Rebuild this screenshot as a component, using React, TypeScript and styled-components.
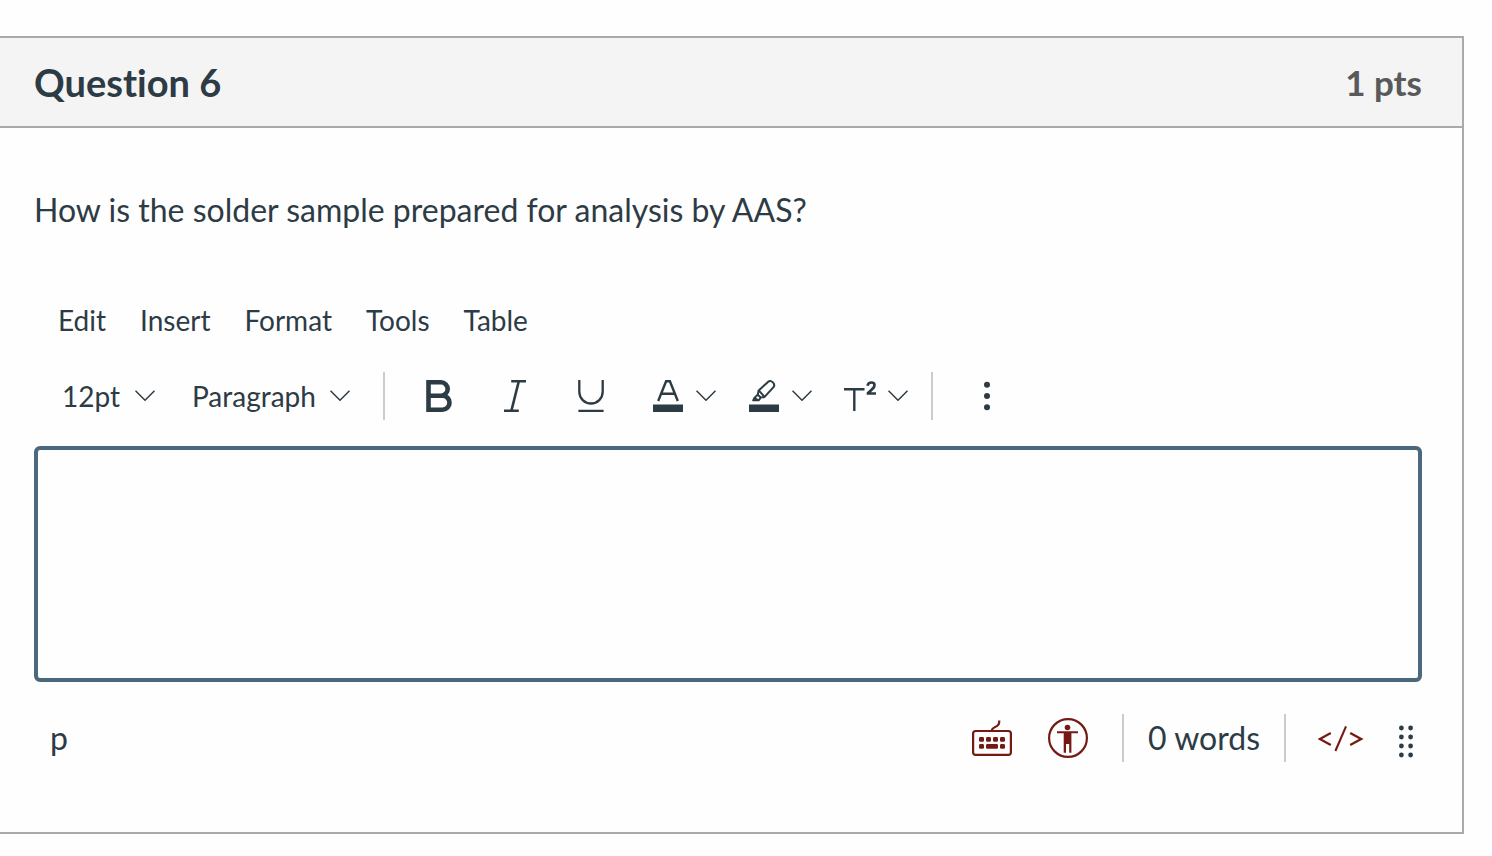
import React from "react";
import styled, { createGlobalStyle } from "styled-components";

const ink = "#2d3b45";
const brand = "#751a12";

const GlobalStyle = createGlobalStyle`
  *, *::before, *::after { box-sizing: border-box; }
  body {
    margin: 0;
    background: #fefefe;
    color: ${ink};
    font-family: Lato, "Liberation Sans", sans-serif;
    font-variant-ligatures: none;
    text-rendering: optimizeLegibility;
  }
`;

const Card = styled.section`
  margin: 36px 28px 22px 0;
  border: 2px solid #aaa;
  border-left: 0;
`;

const Header = styled.header`
  display: flex;
  justify-content: space-between;
  align-items: center;
  padding: 20px 40px 20px 34px;
  border-bottom: 2px solid #aaa;
  background: #f4f4f4;
  line-height: 48px;
`;

const Title = styled.h2`
  margin: 0;
  font-size: 38px;
  font-weight: 700;
`;

const Points = styled.span`
  color: #595959;
  font-size: 35px;
  font-weight: 700;
`;

const Content = styled.div`
  padding: 58px 40px 70px 34px;
`;

const Prompt = styled.p`
  margin: 0 0 66px;
  font-size: 32px;
  line-height: 48px;
`;

const MenuBar = styled.nav`
  display: flex;
  padding: 0 7px;
`;

const MenuButton = styled.button`
  padding: 0 17px;
  border: 0;
  background: none;
  color: inherit;
  font: 28px/40px Lato, "Liberation Sans", sans-serif;
`;

const Toolbar = styled.div`
  display: flex;
  align-items: center;
  padding: 32px 0 26px 24px;
`;

const SelectField = styled.label`
  display: grid;
  align-items: center;
  margin-right: 33px;

  > * { grid-area: 1 / 1; }
  > svg { justify-self: end; pointer-events: none; }
`;

const Select = styled.select`
  appearance: none;
  padding: 0 34px 0 4px;
  border: 0;
  background: none;
  color: inherit;
  font: 28px/48px Lato, "Liberation Sans", sans-serif;
`;

const Divider = styled.span<{ $color: string }>`
  flex: none;
  width: 2px;
  height: 48px;
  background: ${(p) => p.$color};
`;

const ToolGroup = styled.div`
  display: flex;
  align-items: center;
  padding: 0 14px 0 16px;
`;

const ToolButton = styled.button`
  display: flex;
  align-items: center;
  justify-content: center;
  width: 76px;
  height: 48px;
  padding: 0;
  border: 0;
  background: none;
  color: inherit;
`;

const SplitButton = styled(ToolButton)`
  justify-content: flex-start;
  gap: 12px;
  width: 96px;
  padding-left: 23px;
`;

const Editor = styled.textarea`
  display: block;
  width: 100%;
  height: 236px;
  padding: 16px;
  border: 4px solid #4b687c;
  border-radius: 6px;
  outline: 0;
  background: #fefefe;
  color: inherit;
  font: 32px/48px Lato, "Liberation Sans", sans-serif;
  resize: none;
`;

const StatusBar = styled.footer`
  display: flex;
  align-items: center;
  justify-content: space-between;
  padding: 32px 8px 0 16px;
  font-size: 32px;
  line-height: 48px;
`;

const StatusTools = styled.div`
  display: flex;
  align-items: center;
`;

const StatusButton = styled.button<{ $gap: number }>`
  display: flex;
  margin: 0 ${(p) => p.$gap}px 0 0;
  padding: 0;
  border: 0;
  background: none;
  color: ${brand};
`;

const WordCount = styled.span`
  padding: 0 24px;
`;

const SourceButton = styled(StatusButton)`
  margin-left: 32px;
`;

const ResizeHandle = styled(StatusButton)`
  color: ${ink};
`;

const Chevron = () => (
  <svg width="20" height="12" viewBox="0 0 20 12" fill="none" stroke="currentColor" strokeWidth="1.5" aria-hidden="true">
    <path d="M0.5 0.8 10 10.2 19.5 0.8" />
  </svg>
);

const BoldIcon = () => (
  <svg width="26" height="32" viewBox="0 0 26 32" fill="none" stroke="currentColor" strokeWidth="4.6" aria-hidden="true">
    <path d="M2.5 2.3H15A6.4 6.4 0 0 1 15 15.7H2.5M15 15.7H16.5A7 7 0 0 1 16.5 29.7H2.5M2.5 0V32" />
  </svg>
);

const ItalicIcon = () => (
  <svg width="22" height="32" viewBox="0 0 22 32" fill="none" stroke="currentColor" aria-hidden="true">
    <path d="M7.2 1.2H22M0 30.8H14.8" strokeWidth="2.4" />
    <path d="M14.8 1.2 7.4 30.8" strokeWidth="2.6" />
  </svg>
);

const UnderlineIcon = () => (
  <svg width="26" height="32" viewBox="0 0 26 32" fill="none" stroke="currentColor" strokeWidth="2.3" aria-hidden="true">
    <path d="M1.3 0V11.8A11.7 11.7 0 0 0 24.7 11.8V0M0.4 30.8H25.6" />
  </svg>
);

const TextColorIcon = () => (
  <svg width="32" height="32" viewBox="0 0 32 32" fill="none" stroke="currentColor" strokeWidth="2.4" aria-hidden="true">
    <path d="M6.2 21 14.1 1.2H17.9L25.8 21M9 13.8H23" />
    <path d="M1 24.5H31V32H1Z" fill="currentColor" stroke="none" />
  </svg>
);

const HighlightIcon = () => (
  <svg width="32" height="32" viewBox="0 0 32 32" fill="none" stroke="currentColor" strokeWidth="2" strokeLinejoin="round" aria-hidden="true">
    <path d="M10.7 10.4 20 1.9Q22.4 0 24.9 2.4 27.4 5 25.3 7.3L16.6 16.9Z" />
    <path d="M10.7 10.4 9.7 14.7 6.2 18.1 5.2 20.3H10.6L12.8 17.6 16.6 16.9M9.7 14.7 12.8 17.6" />
    <path d="M6.4 17.9 9.8 20.2" />
    <path d="M1 24.5H31V32H1Z" fill="currentColor" stroke="none" />
  </svg>
);

const SuperscriptIcon = () => (
  <svg width="32" height="32" viewBox="0 0 32 32" fill="none" stroke="currentColor" aria-hidden="true">
    <path d="M0 9.2H20.5M10.3 9.2V31" strokeWidth="2.4" />
    <path d="M23.5 5.7Q24.2 2.5 27.4 2.5 30.5 2.5 30.5 5.2 30.5 7 28.3 9.1L24 13.2V13.5H32" strokeWidth="2.7" />
  </svg>
);

const MoreIcon = () => (
  <svg width="6" height="30" viewBox="0 0 6 30" fill="currentColor" aria-hidden="true">
    <circle cx="3" cy="3.8" r="3" />
    <circle cx="3" cy="15" r="3" />
    <circle cx="3" cy="26.2" r="3" />
  </svg>
);

const KeyboardIcon = () => (
  <svg width="40" height="36" viewBox="0 0 40 36" fill="none" stroke="currentColor" aria-hidden="true">
    <rect x="1.1" y="11" width="37.8" height="23.8" rx="2.6" strokeWidth="2.2" />
    <path d="M20 10.5V9.8Q20.2 8.6 21.6 7.9L25.2 5.9Q27 4.7 27.2 2.4V0.6" strokeWidth="2.2" />
    <g fill="currentColor" stroke="none">
      <rect x="7" y="17" width="5" height="4.8" rx="1.4" />
      <rect x="14" y="17" width="5" height="4.8" rx="1.4" />
      <rect x="21" y="17" width="5" height="4.8" rx="1.4" />
      <rect x="28" y="17" width="5" height="4.8" rx="1.4" />
      <rect x="7" y="24" width="5" height="4.8" rx="1.4" />
      <rect x="14" y="24" width="12" height="4.8" rx="1.4" />
      <rect x="28" y="24" width="5" height="4.8" rx="1.4" />
    </g>
  </svg>
);

const AccessibilityIcon = () => (
  <svg width="40" height="40" viewBox="0 0 40 40" fill="none" stroke="currentColor" aria-hidden="true">
    <circle cx="20" cy="20" r="18.9" strokeWidth="2.2" />
    <g fill="currentColor" stroke="none">
      <circle cx="19.5" cy="9.5" r="2.8" />
      <path d="M9 13.3H30V15.3H23.4V34.7H21.2V26H18V34.7H15.7V15.3H9Z" />
    </g>
  </svg>
);

const CodeIcon = () => (
  <svg width="46" height="28" viewBox="0 -2 46 28" fill="none" stroke="currentColor" strokeWidth="2.1" aria-hidden="true">
    <path d="M12.8 7 1.8 13 12.8 19.1M32.2 7 43.2 13 32.2 19.1" strokeWidth="2.3" />
    <path d="M28 0.4 17.4 25" />
  </svg>
);

const HandleIcon = () => (
  <svg width="16" height="40" viewBox="0 0 16 40" fill="currentColor" aria-hidden="true">
    {[10, 19, 28, 37].map((y) => (
      <React.Fragment key={y}>
        <circle cx="3.4" cy={y} r="2.4" />
        <circle cx="12.6" cy={y} r="2.4" />
      </React.Fragment>
    ))}
  </svg>
);

const menus = ["Edit", "Insert", "Format", "Tools", "Table"];

export default function App() {
  return (
    <>
      <GlobalStyle />
      <Card>
        <Header>
          <Title>Question 6</Title>
          <Points>1 pts</Points>
        </Header>
        <Content>
          <Prompt id="prompt">How is the solder sample prepared for analysis by AAS?</Prompt>
          <MenuBar>
            {menus.map((name) => (
              <MenuButton key={name} type="button">{name}</MenuButton>
            ))}
          </MenuBar>
          <Toolbar>
            <SelectField>
              <Select aria-label="Font size"><option>12pt</option></Select>
              <Chevron />
            </SelectField>
            <SelectField>
              <Select aria-label="Block style"><option>Paragraph</option></Select>
              <Chevron />
            </SelectField>
            <Divider $color="#c7cdd1" />
            <ToolGroup>
              <ToolButton type="button" aria-label="Bold"><BoldIcon /></ToolButton>
              <ToolButton type="button" aria-label="Italic"><ItalicIcon /></ToolButton>
              <ToolButton type="button" aria-label="Underline"><UnderlineIcon /></ToolButton>
              <SplitButton type="button" aria-label="Text color"><TextColorIcon /><Chevron /></SplitButton>
              <SplitButton type="button" aria-label="Highlight color"><HighlightIcon /><Chevron /></SplitButton>
              <SplitButton type="button" aria-label="Superscript"><SuperscriptIcon /><Chevron /></SplitButton>
            </ToolGroup>
            <Divider $color="#c7cdd1" />
            <ToolGroup>
              <ToolButton type="button" aria-label="More"><MoreIcon /></ToolButton>
            </ToolGroup>
          </Toolbar>
          <Editor aria-labelledby="prompt" />
          <StatusBar>
            <span>p</span>
            <StatusTools>
              <StatusButton type="button" aria-label="Keyboard shortcuts" $gap={36}><KeyboardIcon /></StatusButton>
              <StatusButton type="button" aria-label="Accessibility checker" $gap={34}><AccessibilityIcon /></StatusButton>
              <Divider $color="#ccc" />
              <WordCount>0 words</WordCount>
              <Divider $color="#ccc" />
              <SourceButton type="button" aria-label="HTML editor" $gap={34}><CodeIcon /></SourceButton>
              <ResizeHandle type="button" aria-label="Resize" $gap={0}><HandleIcon /></ResizeHandle>
            </StatusTools>
          </StatusBar>
        </Content>
      </Card>
    </>
  );
}
